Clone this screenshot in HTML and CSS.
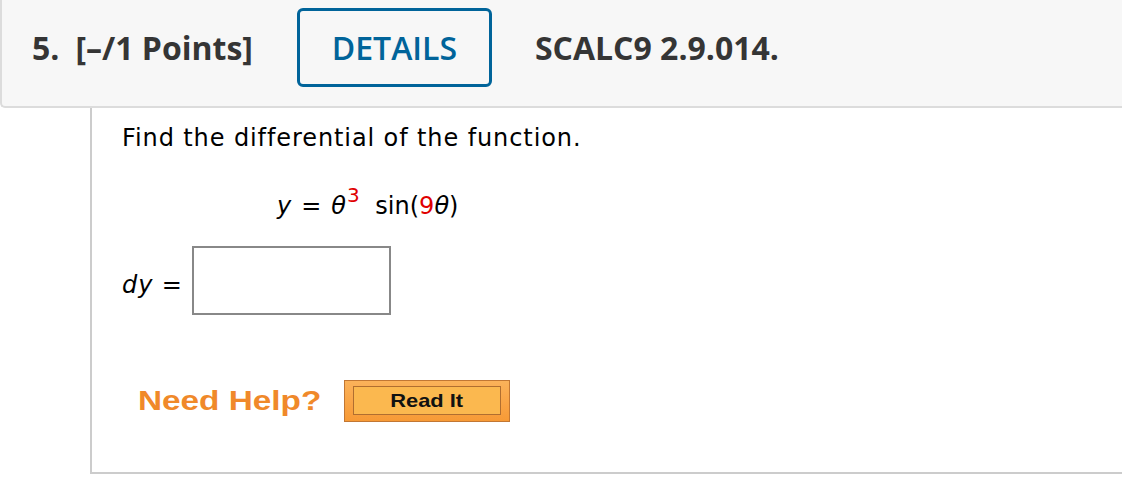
FILE: index.html
```html
<!DOCTYPE html>
<html>
<head>
<meta charset="utf-8">
<link rel="stylesheet" href="styles.css">
</head>
<body>
<div class="header">
  <span class="qnum">5.</span>
  <span class="points">[–/1 Points]</span>
  <span class="details">DETAILS</span>
  <span class="code">SCALC9 2.9.014.</span>
</div>
<div class="panel">
  <p class="prompt">Find the differential of the function.</p>
  <p class="equation"><span class="mi">y</span><span class="op">=</span><span class="mi">θ</span><span class="sup">3</span> sin(<span class="red">9</span><span class="mi">θ</span>)</p>
  <div class="answer">
    <span class="label"><span class="mi">dy</span> =</span>
    <span class="box"></span>
  </div>
  <div class="help">
    <span class="need"><span class="need-txt">Need Help?</span></span>
    <span class="readit"><span class="readit-inner"><span class="readit-txt">Read It</span></span></span>
  </div>
</div>
</body>
</html>
```
FILE: styles.css
```css
html, body {
  margin: 0;
  padding: 0;
  background: #ffffff;
}

.header {
  display: flex;
  align-items: flex-start;
  box-sizing: border-box;
  height: 108px;
  padding: 8px 0 0 30px;
  background: #f7f7f7;
  border-left: 2px solid #dcdcdc;
  border-bottom: 2px solid #dcdcdc;
  border-bottom-left-radius: 5px;
  font-family: "Open Sans", sans-serif;
  font-size: 32px;
  font-weight: 700;
  color: #353535;
}

.qnum,
.points,
.code {
  line-height: 79px;
}

.qnum {
  margin-right: 16px;
}

.details {
  display: flex;
  align-items: center;
  justify-content: center;
  box-sizing: border-box;
  width: 195px;
  height: 79px;
  margin-left: 44px;
  border: 3px solid #00649a;
  border-radius: 6px;
  color: #00649a;
  font-weight: 600;
}

.code {
  margin-left: 43px;
}

.panel {
  box-sizing: border-box;
  height: 366px;
  margin-left: 90px;
  padding: 16px 0 0 30px;
  border-left: 2px solid #cccccc;
  border-bottom: 2px solid #cccccc;
  font-family: "DejaVu Sans", Verdana, sans-serif;
  font-size: 24px;
  letter-spacing: 0.9px;
  color: #000;
}

.prompt {
  margin: 0;
  line-height: 28px;
}

.equation {
  margin: 40px 0 0 155px;
  line-height: 28px;
  letter-spacing: 0;
}

.mi {
  font-style: italic;
}

.op {
  margin: 0 10px;
}

.sup {
  position: relative;
  top: -12px;
  font-size: 20px;
  color: #e00000;
  margin: 0 8px 0 1px;
}

.red {
  color: #e00000;
}

.answer {
  display: flex;
  align-items: flex-start;
  margin-top: 25px;
}

.label {
  margin: 25px 9px 0 0;
  line-height: 28px;
}

.box {
  box-sizing: border-box;
  width: 199px;
  height: 69px;
  border: 2px solid #888888;
  background: #fff;
}

.help {
  display: flex;
  align-items: center;
  margin-top: 65px;
  margin-left: 16px;
  letter-spacing: 0;
}

.need {
  width: 206px;
  font-family: "Liberation Sans", Arial, sans-serif;
  font-weight: 700;
  font-size: 28px;
  color: #f0892a;
}

.need-txt {
  display: inline-block;
  transform: scaleX(1.19);
  transform-origin: left center;
}

.readit {
  display: flex;
  box-sizing: border-box;
  width: 166px;
  height: 42px;
  padding: 5px 8px 6px 8px;
  border: 1px solid #c27733;
  background: linear-gradient(#fbb25a, #f79a36);
}

.readit-inner {
  flex: 1;
  display: flex;
  align-items: center;
  justify-content: center;
  border: 1px solid #b06e30;
  background: #fbb84f;
}

.readit-txt {
  display: inline-block;
  font-family: "Liberation Sans", Arial, sans-serif;
  font-weight: 700;
  font-size: 19px;
  color: #111;
  transform: scaleX(1.15);
}
```
